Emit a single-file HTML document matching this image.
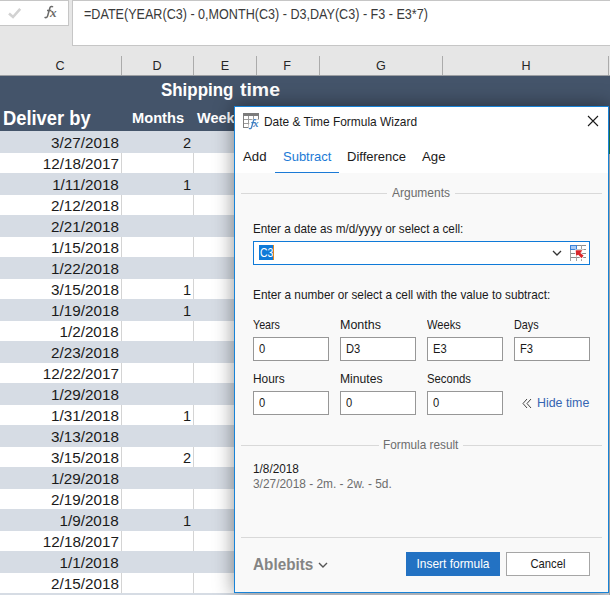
<!DOCTYPE html>
<html><head><meta charset="utf-8">
<style>
*{box-sizing:border-box;margin:0;padding:0}
html,body{width:610px;height:595px;overflow:hidden;background:#e6e6e6;font-family:"Liberation Sans",sans-serif;}
.abs{position:absolute}
#namebox{left:-1px;top:0px;width:70px;height:26px;background:#fff;border:1px solid #c6c6c6}
#fbar{left:72px;top:0px;width:540px;height:46px;background:#fff;border:1px solid #c6c6c6}
#ftext{left:84px;top:5.5px;font-size:14.5px;color:#3a3a3a;white-space:nowrap;line-height:16px;transform:scaleX(.868);transform-origin:left center}
#colhdr{left:0;top:56px;width:610px;height:20px;background:#e6e6e6;border-bottom:1px solid #9c9fa3}
.ch{position:absolute;top:58px;font-size:12.6px;color:#262626;width:20px;text-align:center;line-height:16px}
.cs{position:absolute;top:56px;width:1px;height:19px;background:#ababab}
#dark{left:0;top:76px;width:610px;height:55px;background:#44546a}
.row{position:absolute;left:0;width:610px}
.band{background:#d6dce4}
.wht{background:#fff}
.gl{position:absolute;top:0;width:1px;height:20px;background:#d4d4d4}
.date{position:absolute;right:491px;font-size:14.6px;transform:scaleX(1.045);transform-origin:right center;color:#1a1a1a;line-height:18px;white-space:nowrap}
.mon{position:absolute;right:419px;font-size:14.6px;color:#1a1a1a;line-height:18px}
.hb{color:#fff;font-weight:bold;white-space:nowrap;transform-origin:left center}
#dlg{left:234px;top:106px;width:375px;height:487px;background:#f9f9f9;border:1px solid #1883d7;box-shadow:0 0 18px 1px rgba(0,0,0,.4)}
#dlgtop{left:0;top:0;width:373px;height:66px;background:#fff}
.t{position:absolute;transform-origin:left center;white-space:nowrap;font-size:12.4px;color:#1a1a1a;line-height:15px}
.g{color:#6d6d6d}
.hl{position:absolute;height:1px;background:#d9d9d9}
.inp{position:absolute;width:76px;height:24px;background:#fff;border:1px solid #979797}
.inp span{position:absolute;left:5px;top:4px;font-size:12.4px;line-height:15px;color:#1a1a1a;transform:scaleX(.9);transform-origin:left center}
</style></head><body>
<div class="abs" id="namebox"></div>
<svg class="abs" style="left:6px;top:6px" width="18" height="14" viewBox="0 0 18 14"><path d="M3 7.5 L7 11 L14.2 2.8" fill="none" stroke="#d2d2d2" stroke-width="2.6"/></svg>
<svg class="abs" style="left:42px;top:3px" width="18" height="18" viewBox="0 0 18 18"><path d="M10.8 4.2C10.4 3.1 8.4 3.1 7.9 4.8L5.6 13C5.1 14.8 3.6 15 2.6 14.2M5 7.6H9.4" fill="none" stroke="#6c6c6c" stroke-width="1.5"/><text x="8" y="14.3" textLength="6.6" lengthAdjust="spacingAndGlyphs" font-family="Liberation Serif" font-style="italic" font-weight="bold" font-size="11.5" fill="#6c6c6c">x</text></svg>
<div class="abs" id="fbar"></div>
<div class="abs" id="ftext">=DATE(YEAR(C3) - 0,MONTH(C3) - D3,DAY(C3) - F3 - E3*7)</div>
<div class="abs" id="colhdr"></div>
<div class="ch" style="left:50px">C</div>
<div class="ch" style="left:147px">D</div>
<div class="ch" style="left:215px">E</div>
<div class="ch" style="left:277px">F</div>
<div class="ch" style="left:371px">G</div>
<div class="ch" style="left:516px">H</div>
<div class="cs" style="left:121px"></div>
<div class="cs" style="left:193px"></div>
<div class="cs" style="left:256px"></div>
<div class="cs" style="left:319px"></div>
<div class="cs" style="left:442px"></div>
<div class="cs" style="left:608px"></div>
<div class="abs" id="dark"></div>
<div class="abs hb" style="left:161px;top:79px;font-size:18px;line-height:22px;transform:scaleX(.94)">Shipping</div><div class="abs hb" style="left:239.5px;top:79px;font-size:18px;line-height:22px;transform:scaleX(1.08)">time</div>
<div class="abs hb" style="left:2.5px;top:106px;font-size:19.5px;line-height:24px;transform:scaleX(.94)">Deliver by</div>
<div class="abs hb" style="left:132px;top:109px;font-size:14.5px;line-height:18px;transform:scaleX(1.01)">Months</div>
<div class="abs hb" style="left:197px;top:109px;font-size:14.5px;line-height:18px">Weeks</div>
<div class="row band" style="top:131px;height:22px"><div class="date" style="top:3px">3/27/2018</div><div class="mon" style="top:3px">2</div></div>
<div class="row wht" style="top:153px;height:20px"><div class="gl" style="left:121px"></div><div class="gl" style="left:193px"></div><div class="date" style="top:2px">12/18/2017</div></div>
<div class="row band" style="top:173px;height:22px"><div class="date" style="top:3px">1/11/2018</div><div class="mon" style="top:3px">1</div></div>
<div class="row wht" style="top:195px;height:20px"><div class="gl" style="left:121px"></div><div class="gl" style="left:193px"></div><div class="date" style="top:2px">2/12/2018</div></div>
<div class="row band" style="top:215px;height:22px"><div class="date" style="top:3px">2/21/2018</div></div>
<div class="row wht" style="top:237px;height:20px"><div class="gl" style="left:121px"></div><div class="gl" style="left:193px"></div><div class="date" style="top:2px">1/15/2018</div></div>
<div class="row band" style="top:257px;height:22px"><div class="date" style="top:3px">1/22/2018</div></div>
<div class="row wht" style="top:279px;height:20px"><div class="gl" style="left:121px"></div><div class="gl" style="left:193px"></div><div class="date" style="top:2px">3/15/2018</div><div class="mon" style="top:2px">1</div></div>
<div class="row band" style="top:299px;height:22px"><div class="date" style="top:3px">1/19/2018</div><div class="mon" style="top:3px">1</div></div>
<div class="row wht" style="top:321px;height:20px"><div class="gl" style="left:121px"></div><div class="gl" style="left:193px"></div><div class="date" style="top:2px">1/2/2018</div></div>
<div class="row band" style="top:341px;height:22px"><div class="date" style="top:3px">2/23/2018</div></div>
<div class="row wht" style="top:363px;height:20px"><div class="gl" style="left:121px"></div><div class="gl" style="left:193px"></div><div class="date" style="top:2px">12/22/2017</div></div>
<div class="row band" style="top:383px;height:22px"><div class="date" style="top:3px">1/29/2018</div></div>
<div class="row wht" style="top:405px;height:20px"><div class="gl" style="left:121px"></div><div class="gl" style="left:193px"></div><div class="date" style="top:2px">1/31/2018</div><div class="mon" style="top:2px">1</div></div>
<div class="row band" style="top:425px;height:22px"><div class="date" style="top:3px">3/13/2018</div></div>
<div class="row wht" style="top:447px;height:20px"><div class="gl" style="left:121px"></div><div class="gl" style="left:193px"></div><div class="date" style="top:2px">3/15/2018</div><div class="mon" style="top:2px">2</div></div>
<div class="row band" style="top:467px;height:22px"><div class="date" style="top:3px">1/29/2018</div></div>
<div class="row wht" style="top:489px;height:20px"><div class="gl" style="left:121px"></div><div class="gl" style="left:193px"></div><div class="date" style="top:2px">2/19/2018</div></div>
<div class="row band" style="top:509px;height:22px"><div class="date" style="top:3px">1/9/2018</div><div class="mon" style="top:3px">1</div></div>
<div class="row wht" style="top:531px;height:20px"><div class="gl" style="left:121px"></div><div class="gl" style="left:193px"></div><div class="date" style="top:2px">12/18/2017</div></div>
<div class="row band" style="top:551px;height:22px"><div class="date" style="top:3px">1/1/2018</div></div>
<div class="row wht" style="top:573px;height:20px"><div class="gl" style="left:121px"></div><div class="gl" style="left:193px"></div><div class="date" style="top:2px">2/15/2018</div></div>
<div class="row band" style="top:593px;height:22px"><div class="date" style="top:3px">1/1/2018</div></div>


<div class="abs" id="dlg">
 <div class="abs" id="dlgtop"></div>
 <svg class="abs" style="left:8px;top:6px" width="18" height="17" viewBox="0 0 18 17">
  <rect x="0.5" y="0.5" width="15" height="14" fill="#fff" stroke="#808080"/>
  <rect x="0" y="0" width="16" height="3" fill="#7c7c7c"/>
  <path d="M1 6.5H15M1 10.5H15M5.5 3V14M10.5 3V14" stroke="#9c9c9c" fill="none"/>
  <path d="M9 6.5 L16.5 6.5 L16.5 16 L5.5 16 L5.5 12 L7 9 Z" fill="#fff"/>
  <path d="M12.8 7.3 C12.3 6.2 10.8 6.3 10.4 7.8 L8.6 14.2 C8.1 15.9 6.8 16 6 15.2 M8.3 9.6 H12" fill="none" stroke="#3f7fc2" stroke-width="1.3"/>
  <text x="10.3" y="14" font-family="Liberation Serif" font-style="italic" font-weight="bold" font-size="10.5" fill="#3f7fc2">x</text>
 </svg>
 <div class="t" style="left:29px;top:8px;font-size:12.6px;transform:scaleX(.947)">Date &amp; Time Formula Wizard</div>
 <svg class="abs" style="left:352px;top:8px" width="12" height="12" viewBox="0 0 12 12"><path d="M1 1L11 11M11 1L1 11" stroke="#1a1a1a" stroke-width="1.1" fill="none"/></svg>
 <div class="t" style="left:8px;top:42px;font-size:13.2px">Add</div>
 <div class="t" style="left:48px;top:42px;font-size:13.2px;color:#1b7ad6;transform:scaleX(.985)">Subtract</div>
 <div class="t" style="left:112px;top:42px;font-size:13.2px;transform:scaleX(.985)">Difference</div>
 <div class="t" style="left:187px;top:42px;font-size:13.2px">Age</div>
 <div class="abs" style="left:40px;top:65px;width:64px;height:1px;background:#1b7ad6"></div>
 <div class="hl" style="left:6px;top:86px;width:146px"></div>
 <div class="t g" style="left:157px;top:79px;transform:scaleX(0.968)">Arguments</div>
 <div class="hl" style="left:220px;top:86px;width:147px"></div>
 <div class="t" style="left:18px;top:115px;transform:scaleX(0.9456)">Enter a date as m/d/yyyy or select a cell:</div>
 <div class="abs" style="left:18px;top:134px;width:337px;height:24px;background:#fff;border:1px solid #0f7ad8"></div>
 <div class="abs" style="left:24px;top:138px;width:14px;height:15px;background:#0f7ad8"></div><div class="abs" style="left:38px;top:138px;width:1px;height:15px;background:#e0861a"></div>
 <div class="t" style="left:24.5px;top:138.5px;color:#fff;transform:scaleX(.84)">C3</div>
 <svg class="abs" style="left:317px;top:143px" width="10" height="7" viewBox="0 0 10 7"><path d="M1 1L5 5L9 1" stroke="#333" stroke-width="1.3" fill="none"/></svg>
 <svg class="abs" style="left:335px;top:138px" width="18" height="17" viewBox="0 0 18 17">
  <path d="M0 0.5H16M0 4.5H16M0 8.5H16M0 12.5H16" stroke="#8c8c8c" fill="none"/>
  <path d="M0.5 0V16M6.5 0V16M11.5 0V16" stroke="#a0a0a0" fill="none"/>
  <rect x="0.5" y="0.5" width="6" height="4" fill="#a9caf5" stroke="#3b83d9"/>
  <path d="M5.7 5.2L12.4 5.2L10.3 8.1L13.6 10.6L11.5 13.2L8.3 9.8L6.1 10.8Z" fill="#d9272b" stroke="#fff" stroke-width="1.6" paint-order="stroke"/>
 </svg>
 <div class="t" style="left:18px;top:181px;transform:scaleX(0.953)">Enter a number or select a cell with the value to subtract:</div>
 <div class="t" style="left:18px;top:211px;transform:scaleX(0.862)">Years</div>
 <div class="t" style="left:105px;top:211px;transform:scaleX(1.007)">Months</div>
 <div class="t" style="left:192px;top:211px;transform:scaleX(0.897)">Weeks</div>
 <div class="t" style="left:279px;top:211px;transform:scaleX(0.872)">Days</div>
 <div class="inp" style="left:18px;top:230px"><span>0</span></div>
 <div class="inp" style="left:105px;top:230px"><span>D3</span></div>
 <div class="inp" style="left:192px;top:230px"><span>E3</span></div>
 <div class="inp" style="left:279px;top:230px"><span>F3</span></div>
 <div class="t" style="left:18px;top:265px;transform:scaleX(0.96)">Hours</div>
 <div class="t" style="left:105px;top:265px;transform:scaleX(0.979)">Minutes</div>
 <div class="t" style="left:192px;top:265px;transform:scaleX(0.913)">Seconds</div>
 <div class="inp" style="left:18px;top:284px"><span>0</span></div>
 <div class="inp" style="left:105px;top:284px"><span>0</span></div>
 <div class="inp" style="left:192px;top:284px"><span>0</span></div>
 <svg class="abs" style="left:286.7px;top:291px" width="10" height="11" viewBox="0 0 10 11"><path d="M5 1L1 5.5L5 10M9 1L5 5.5L9 10" stroke="#444" stroke-width="1" fill="none"/></svg>
 <div class="t" style="left:302px;top:289px;color:#3565b2">Hide time</div>
 <div class="hl" style="left:6px;top:338px;width:138px"></div>
 <div class="t g" style="left:148px;top:331px;transform:scaleX(0.952)">Formula result</div>
 <div class="hl" style="left:228px;top:338px;width:139px"></div>
 <div class="t" style="left:18px;top:355px;transform:scaleX(0.952)">1/8/2018</div>
 <div class="t g" style="left:18px;top:370px;transform:scaleX(0.959)">3/27/2018 - 2m. - 2w. - 5d.</div>
 <div class="hl" style="left:6px;top:430px;width:361px"></div>
 <div class="t" style="left:18px;top:447.5px;font-size:15.8px;font-weight:bold;color:#848484;line-height:20px;transform:scaleX(0.968)">Ablebits</div>
 <svg class="abs" style="left:83px;top:455px" width="10" height="7" viewBox="0 0 10 7"><path d="M1 1L5 5L9 1" stroke="#555" stroke-width="1.4" fill="none"/></svg>
 <div class="abs" style="left:171px;top:445px;width:94px;height:24px;background:#2372c3"></div>
 <div class="t" style="left:171px;top:450px;width:94px;text-align:center;color:#fff;transform-origin:center center;transform:scaleX(.964)">Insert formula</div>
 <div class="abs" style="left:271px;top:445px;width:84px;height:24px;background:#fff;border:1px solid #a6a6a6"></div>
 <div class="t" style="left:271px;top:450px;width:84px;text-align:center;transform-origin:center center;transform:scaleX(.909)">Cancel</div>
</div>
<div class="abs" style="left:609px;top:130px;width:1px;height:24px;background:#1f6b43"></div>
<div class="abs" style="left:609px;top:154px;width:1px;height:441px;background:#a3a3a3"></div>
</body></html>
